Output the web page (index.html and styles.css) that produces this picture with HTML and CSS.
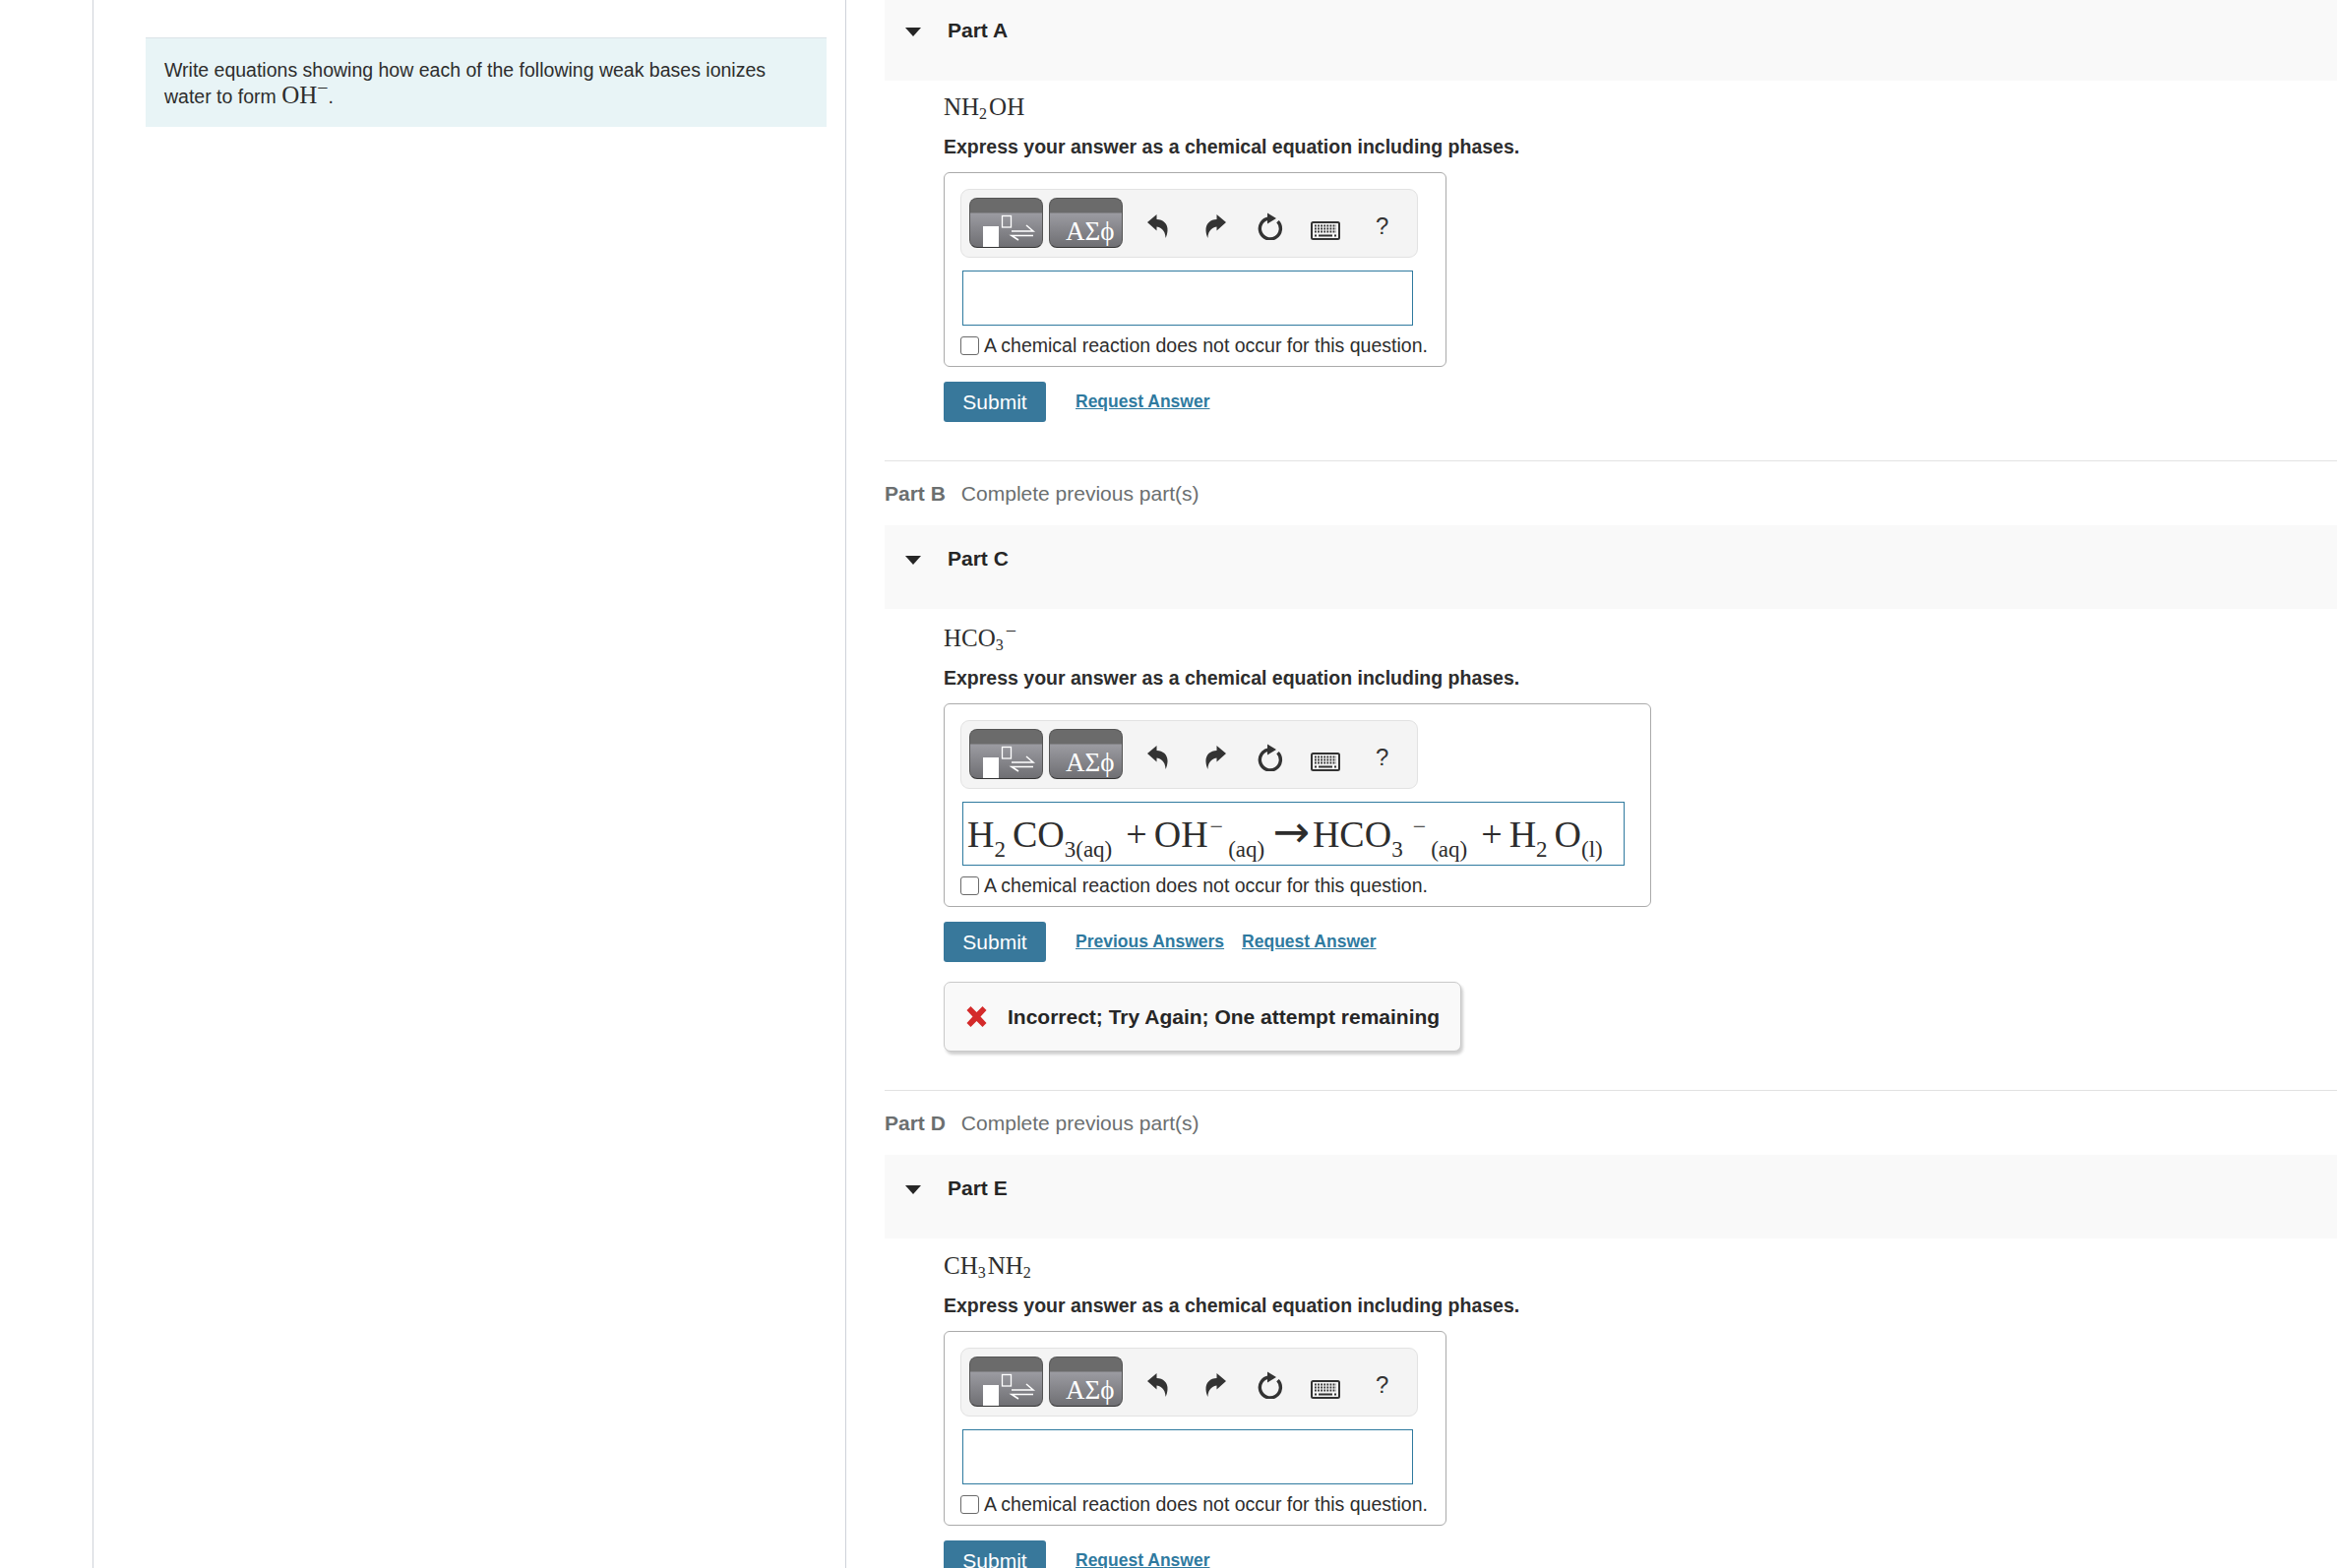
FILE: index.html
```html
<!DOCTYPE html>
<html lang="en">
<head>
<meta charset="utf-8">
<title>Weak bases</title>
<link rel="stylesheet" href="styles.css">
</head>
<body>
<svg class="defs" width="0" height="0" aria-hidden="true">
  <defs>
    <symbol id="i-undo" viewBox="0 0 21 24"><path d="M0 8 L9.500 0 V5 C16 5 21 9.500 20.500 16.500 C20.300 19.500 19.500 22 18.500 24 C18.500 19 16 13.200 9.500 12.500 V16.500 Z"/></symbol>
    <symbol id="i-reload" viewBox="0 0 26 28"><path d="M20.500 9.200 A10.500 10.500 0 1 1 11.500 6" fill="none" stroke="currentColor" stroke-width="3.400"/><path d="M10 0.500 L19 6 L10 11.500 Z"/></symbol>
    <symbol id="i-kbd" viewBox="0 0 30 19"><rect x="1" y="1" width="28" height="17" rx="1.500" fill="none" stroke="currentColor" stroke-width="2"/><path d="M4 4.500h22M4 7.500h22M4 10.500h22" stroke="currentColor" stroke-width="1.800" stroke-dasharray="1.800 1.300" fill="none"/><path d="M8 14.500h14" stroke="currentColor" stroke-width="2"/><path d="M4 14.500h2M24 14.500h2" stroke="currentColor" stroke-width="2"/></symbol>
    <symbol id="i-templates" viewBox="0 0 73 36"><rect x="13" y="15" width="16" height="21" fill="#fff"/><rect x="32.500" y="4.500" width="9" height="11.500" fill="none" stroke="#fff" stroke-width="1.300"/><path d="M42 20 H64 L57 14 M64 24.500 H42 L49 29" fill="none" stroke="#fff" stroke-width="1.500"/></symbol>
  </defs>
</svg>
<div class="page">
  <aside class="rail">
    <div class="intro">Write equations showing how each of the following weak bases ionizes<br>water to form <span class="math">OH<sup class="msup">−</sup></span>.</div>
  </aside>
  <main class="parts">

    <section class="bar"><span class="caret"></span><h2 class="bar-title">Part A</h2></section>
    <div class="part-body">
      <p class="formula math">NH<sub>2</sub>OH</p>
      <p class="prompt">Express your answer as a chemical equation including phases.</p>
      <div class="answer answer-small">
        <div class="toolbar">
          <span class="pal"><svg class="pal-art"><use href="#i-templates"/></svg></span>
          <span class="pal pal-text">ΑΣϕ</span>
          <svg class="ti ti-undo"><use href="#i-undo"/></svg>
          <svg class="ti ti-redo"><use href="#i-undo"/></svg>
          <svg class="ti ti-reload"><use href="#i-reload"/></svg>
          <svg class="ti ti-kbd"><use href="#i-kbd"/></svg>
          <span class="ti-help">?</span>
        </div>
        <div class="input input-empty"></div>
        <label class="check"><span class="box"></span>A chemical reaction does not occur for this question.</label>
      </div>
      <div class="actions"><span class="submit">Submit</span><a class="link" href="#">Request Answer</a></div>
    </div>
    <div class="locked"><b>Part B</b><span>Complete previous part(s)</span></div>

    <section class="bar"><span class="caret"></span><h2 class="bar-title">Part C</h2></section>
    <div class="part-body">
      <p class="formula formula-c math">HCO<sub>3</sub><sup class="msup">−</sup></p>
      <p class="prompt">Express your answer as a chemical equation including phases.</p>
      <div class="answer answer-wide">
        <div class="toolbar">
          <span class="pal"><svg class="pal-art"><use href="#i-templates"/></svg></span>
          <span class="pal pal-text">ΑΣϕ</span>
          <svg class="ti ti-undo"><use href="#i-undo"/></svg>
          <svg class="ti ti-redo"><use href="#i-undo"/></svg>
          <svg class="ti ti-reload"><use href="#i-reload"/></svg>
          <svg class="ti ti-kbd"><use href="#i-kbd"/></svg>
          <span class="ti-help">?</span>
        </div>
        <div class="input input-filled">
          <span class="eq">H<i class="s s2">2</i>CO<i class="s">3(aq)</i><em class="op">+</em>OH<i class="u">−</i><i class="s saq">(aq)</i><em class="arrow">→</em>HCO<i class="s">3</i><i class="u u2">−</i><i class="s saq">(aq)</i><em class="op">+</em>H<i class="s s2">2</i>O<i class="s">(l)</i></span>
        </div>
        <label class="check"><span class="box"></span>A chemical reaction does not occur for this question.</label>
      </div>
      <div class="actions"><span class="submit">Submit</span><a class="link" href="#">Previous Answers</a><a class="link link-next" href="#">Request Answer</a></div>
      <div class="feedback"><svg class="cross" viewBox="0 0 20 21"><path d="M0 4 L4 0 L10 6 L16 0 L20 4 L14 10.500 L20 17 L16 21 L10 15 L4 21 L0 17 L6 10.500 Z"/></svg>Incorrect; Try Again; One attempt remaining</div>
    </div>
    <div class="locked"><b>Part D</b><span>Complete previous part(s)</span></div>

    <section class="bar"><span class="caret"></span><h2 class="bar-title">Part E</h2></section>
    <div class="part-body">
      <p class="formula formula-e math">CH<sub>3</sub>NH<sub>2</sub></p>
      <p class="prompt">Express your answer as a chemical equation including phases.</p>
      <div class="answer answer-small">
        <div class="toolbar">
          <span class="pal"><svg class="pal-art"><use href="#i-templates"/></svg></span>
          <span class="pal pal-text">ΑΣϕ</span>
          <svg class="ti ti-undo"><use href="#i-undo"/></svg>
          <svg class="ti ti-redo"><use href="#i-undo"/></svg>
          <svg class="ti ti-reload"><use href="#i-reload"/></svg>
          <svg class="ti ti-kbd"><use href="#i-kbd"/></svg>
          <span class="ti-help">?</span>
        </div>
        <div class="input input-empty"></div>
        <label class="check"><span class="box"></span>A chemical reaction does not occur for this question.</label>
      </div>
      <div class="actions"><span class="submit">Submit</span><a class="link" href="#">Request Answer</a></div>
    </div>

  </main>
</div>
</body>
</html>
```

FILE: styles.css
```css
html, body { margin: 0; height: 100%; overflow: hidden; background: #fff; }
body { font-family: "Liberation Sans", Arial, sans-serif; color: #2d2d2d; }
.defs { position: absolute; }
p, h2 { margin: 0; }

.page { display: flex; height: 1594px; padding-left: 94px; box-sizing: border-box; }
.rail { width: 766px; flex: none; box-sizing: border-box; border-left: 1px solid #cfd3d9; border-right: 1px solid #cfd3d9; padding: 38px 19px 0 53px; }
.intro { background: #e8f4f6; border-top: 1px solid #dce3e8; height: 91px; box-sizing: border-box; padding: 19px 19px 0; font-size: 19.500px; line-height: 26px; }
.math { font-family: "Liberation Serif", "Times New Roman", serif; font-size: 25px; }
.msup { font-size: 20px; vertical-align: 9px; line-height: 0; }

.parts { flex: 1; min-width: 0; margin-left: 39px; margin-top: -3px; }
.bar { height: 85px; background: #f9f9f9; display: flex; align-items: flex-start; padding: 24px 0 0 21px; box-sizing: border-box; }
.caret { width: 0; height: 0; border: 8.500px solid transparent; border-top: 9px solid #262626; border-bottom: 0; margin: 7px 0 0; }
.bar-title { margin-left: 27px; font-size: 21px; line-height: 20px; font-weight: bold; color: #262626; }

.part-body { padding-left: 60px; }
.formula { height: 24px; line-height: 24px; margin-top: 15px; color: #2d2d2d; }
.formula sub { font-size: 16px; line-height: 0; vertical-align: -4px; margin-right: 2px; }
.formula-c { margin-top: 18px; }
.formula-e { margin-top: 16px; }
.prompt { margin-top: 16px; font-size: 19.500px; line-height: 24px; font-weight: bold; color: #2d2d2d; }

.answer { margin-top: 14px; border: 1px solid #aaa; border-radius: 6px; padding: 16px 16px 11px; box-sizing: border-box; }
.answer-small { width: 511px; }
.answer-wide { width: 719px; }
.toolbar { width: 465px; height: 70px; box-sizing: border-box; background: #f4f4f4; border: 1px solid #e2e2e2; border-radius: 9px; display: flex; align-items: flex-start; padding: 8px 0 0 8px; color: #333; }
.pal { width: 75px; height: 51px; flex: none; box-sizing: border-box; border-radius: 8px; border: 1px solid #555; border-bottom-color: #333; background: linear-gradient(#6b6b6b 0, #6b6b6b 14px, #9b9ba1 15px, #6f6f73 100%); display: block; }
.pal + .pal { margin-left: 6px; }
.pal-art { display: block; width: 73px; height: 36px; margin-top: 13px; }
.pal-text { color: #fff; font-family: "Liberation Serif", serif; font-size: 27px; line-height: 27px; padding: 20px 0 0 16px; }
.ti { flex: none; fill: currentColor; color: #333; display: block; }
.ti-undo { width: 21px; height: 24px; margin: 17px 0 0 25px; }
.ti-redo { width: 21px; height: 24px; margin: 17px 0 0 38px; transform: scaleX(-1); }
.ti-reload { width: 26px; height: 28px; margin: 15px 0 0 32px; }
.ti-kbd { width: 30px; height: 19px; margin: 24px 0 0 28px; }
.ti-help { margin: 15px 0 0 36px; font-size: 24px; line-height: 28px; color: #333; }

.input { margin: 13px 0 0 2px; border: 1px solid #2f7a9f; box-sizing: border-box; background: #fff; }
.input-empty { width: 458px; height: 56px; }
.input-filled { width: 673px; height: 65px; padding: 0 0 0 4px; display: flex; align-items: center; }
.eq { font-family: "Liberation Serif", serif; font-size: 38px; line-height: 50px; white-space: nowrap; color: #2d2d2d; }
.eq i, .eq em { font-style: normal; }
.s { font-size: 23px; vertical-align: -10px; line-height: 0; }
.s2 { margin-right: 7px; }
.saq { margin-left: 6px; }
.u { font-size: 24px; vertical-align: 13px; line-height: 0; margin-left: 2px; }
.u + .s { margin-left: 5px; }
.u2 { margin-left: 10px; }
.op { font-size: 38px; margin: 0 7px 0 14px; }
.arrow { font-family: "DejaVu Sans", sans-serif; font-size: 45px; line-height: 0; margin: 0 3px 0 8px; display: inline-block; }

.check { display: flex; align-items: center; height: 19px; margin-top: 11px; font-size: 19.500px; line-height: 19px; color: #2d2d2d; white-space: nowrap; }
.box { width: 19px; height: 19px; box-sizing: border-box; border: 1.500px solid #6b6b6b; border-radius: 3px; background: #fff; margin-right: 5px; flex: none; }

.actions { margin-top: 15px; display: flex; align-items: center; height: 41px; }
.submit { width: 104px; height: 41px; background: #38789b; color: #fff; border-radius: 3px; font-size: 21px; line-height: 41px; text-align: center; }
.link { margin-left: 30px; color: #2f7a9f; font-size: 17.500px; font-weight: bold; text-decoration: underline; }
.link-next { margin-left: 18px; }

.feedback { margin-top: 20px; width: 526px; height: 71px; box-sizing: border-box; background: #f9f9f9; border: 1px solid #c9c9c9; border-radius: 7px; box-shadow: 2px 3px 3px #d0d0d0; display: flex; align-items: center; padding-left: 22px; font-size: 21px; font-weight: bold; color: #262626; white-space: nowrap; }
.cross { width: 21px; height: 21px; fill: #d42a2a; margin-right: 21px; flex: none; }

.locked { margin-top: 39px; border-top: 1px solid #e2e2e2; height: 66px; box-sizing: border-box; padding-top: 21px; font-size: 21px; line-height: 24px; color: #6b6f70; }
.locked b { margin-right: 16px; }
```
